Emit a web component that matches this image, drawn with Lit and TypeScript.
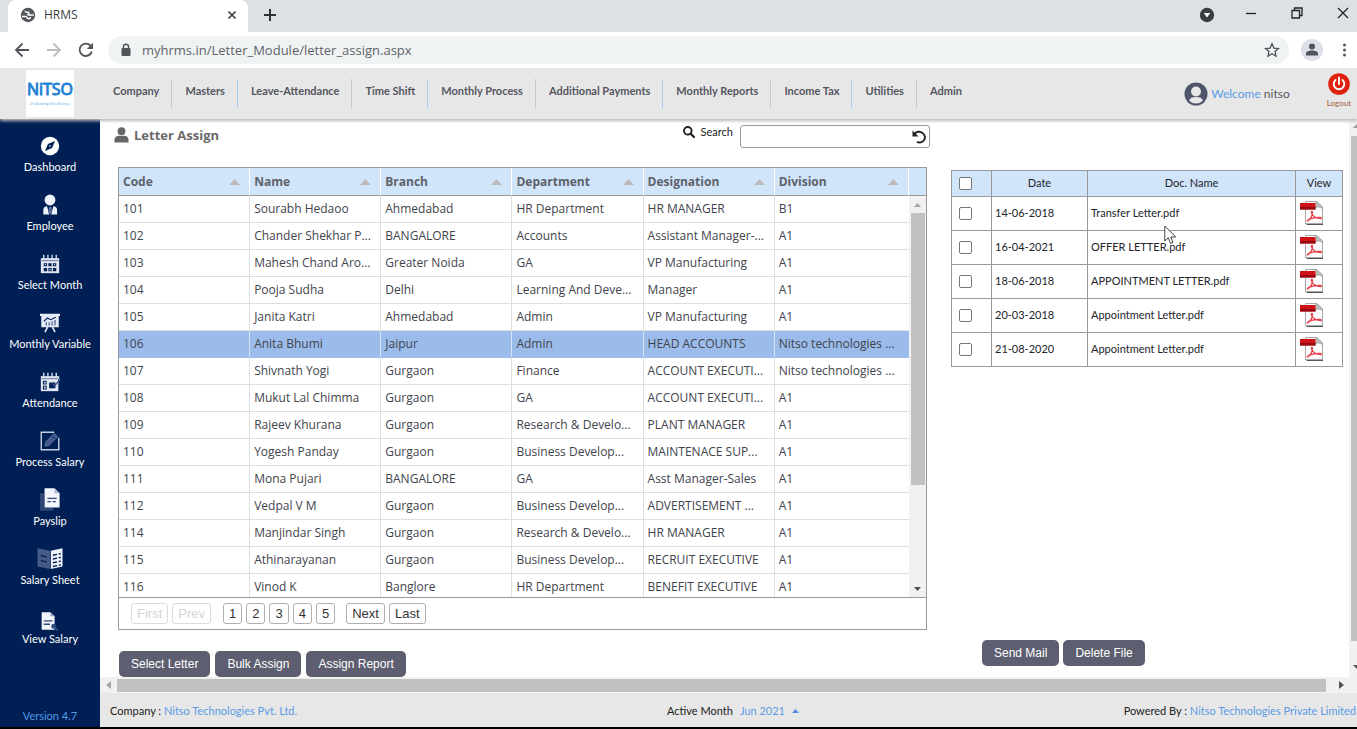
import { LitElement, html, css, svg } from "lit";
import { customElement, state } from "lit/decorators.js";
import { classMap } from "lit/directives/class-map.js";

const MENU = ["Company", "Masters", "Leave-Attendance", "Time Shift", "Monthly Process", "Additional Payments", "Monthly Reports", "Income Tax", "Utilities", "Admin"];

const NAVY = "#001f54";

const calendarTop = svg`<path d="M1 5h22v3.500H1z" fill="#dfe6f2"/><path d="M4.500 1v5M9.500 1v5M14.500 1v5M19.500 1v5" stroke="#dfe6f2" stroke-width="1.600"/><path d="M2 8.200h20" stroke="${NAVY}" stroke-width=".800"/>`;

const SIDE = [
  {
    label: "Dashboard",
    icon: svg`<circle cx="12" cy="12" r="11" fill="#fff"/><path d="M18 6l-3.500 8.500L6 18l3.500-8.500z" fill="${NAVY}"/><circle cx="12" cy="12" r="1.300" fill="#8fa0c0"/>`,
  },
  {
    label: "Employee",
    icon: svg`<circle cx="12" cy="6" r="6.500" fill="#eef3fb"/><path d="M4 23.500v-5.500c0-3 2-4.500 4.500-4.500l2.500 10zM20.500 23.500v-5.500c0-3-2-4.500-4.500-4.500l-2.500 10z" fill="#eef3fb"/><path d="M10.900 14h2.600l1 6.500-2.300 3-2.300-3z" fill="#5b6f99"/>`,
  },
  {
    label: "Select Month",
    icon: svg`${calendarTop}<path d="M1 8.500h22V23H1z" fill="#dfe6f2"/><path d="M4.500 11h4v3.800h-4zM10 11h4v3.800h-4zM15.500 11h4v3.800h-4zM4.500 16.800h4v3.800h-4zM10 16.800h4v3.800h-4zM15.500 16.800h4v3.800h-4z" fill="${NAVY}"/><path d="M5.700 12.200h1.600v1.400H5.700zM16.700 12.200h1.600v1.400h-1.600zM11.200 18h1.600v1.400h-1.600z" fill="#dfe6f2"/>`,
  },
  {
    label: "Monthly Variable",
    icon: svg`<path d="M0 1h24v2.500h-1.500V17h-21V3.500H0z" fill="#e4ebf6"/><path d="M9 17l-3 6M15 17l3 6" stroke="#e4ebf6" stroke-width="2"/><path d="M4.500 10l4.500-4 3.500 2 6.500-3" fill="none" stroke="${NAVY}" stroke-width="1.300"/><path d="M7.500 15v-4M11 15v-4M14.500 15v-5M18 15V8.500" stroke="#4b5f8c" stroke-width="1.500"/>`,
  },
  {
    label: "Attendance",
    icon: svg`${calendarTop}<path d="M1 8.500h21V23H1z" fill="#dfe6f2"/><path d="M3.500 10.500h4.500v4.500H3.500zM3.500 16.500h4.500V21H3.500zM11 12.500h7.500v7H11z" fill="${NAVY}"/><path d="M4.800 11.800h2v2h-2zM4.800 17.800h2v2h-2z" fill="#dfe6f2"/><path d="M15 14l2.500 3 7-9" fill="none" stroke="#3c5488" stroke-width="1.600"/>`,
  },
  {
    label: "Process Salary",
    icon: svg`<path d="M17 1.500H1.500v21h21V8" fill="none" stroke="#c4cede" stroke-width="1.700"/><path d="M6 18l1.200-5L17 3l4 4L11 17z" fill="#42568a" stroke="#6d80a8" stroke-width="1"/><path d="M14.500 5.500l4 4" stroke="${NAVY}" stroke-width="1"/>`,
  },
  {
    label: "Payslip",
    icon: svg`<path d="M0 4h5v17h11v4H0z" fill="#2f4576"/><path d="M5.500-2h12l6 6v17h-18z" fill="#f2f6fc"/><path d="M17.500-2v6h6z" fill="#a9b7d0"/><path d="M9 10h11M9 14h4M15 14h4" stroke="#33487a" stroke-width="1.600"/>`,
  },
  {
    label: "Salary Sheet",
    icon: svg`<path d="M-3-1l15 3v22l-15-3z" fill="#465a87"/><path d="M27-1L13 2v22l14-3z" fill="#eef3fb"/><path d="M1 8l7 1.500M1 14l7 1.500M15.500 7.500l5-1M22.500 6l2.500-.500M15.500 12l5-1M22.500 10.500l2.500-.500M15.500 16.500l5-1M22.500 15l2.500-.500M15.500 21l5-1M22.500 19.500l2.500-.500" stroke="${NAVY}" stroke-width="1.600"/>`,
  },
  {
    label: "View Salary",
    icon: svg`<path d="M2 5h10.500l5 5V26H2z" fill="#f2f6fc"/><path d="M12.500 5v5h5z" fill="#8fa0c0"/><path d="M4.500 15.500H15M4.500 19.500H12" stroke="#33487a" stroke-width="1.600"/><circle cx="16.500" cy="22" r="3" fill="#2f4a80"/><path d="M18 24l3.500 3" stroke="#2f4a80" stroke-width="2"/>`,
  },
];

const COLUMNS = ["Code", "Name", "Branch", "Department", "Designation", "Division"];

const EMPLOYEES = [
  ["101", "Sourabh Hedaoo", "Ahmedabad", "HR Department", "HR MANAGER", "B1"],
  ["102", "Chander Shekhar P...", "BANGALORE", "Accounts", "Assistant Manager-...", "A1"],
  ["103", "Mahesh Chand Aro...", "Greater Noida", "GA", "VP Manufacturing", "A1"],
  ["104", "Pooja Sudha", "Delhi", "Learning And Deve...", "Manager", "A1"],
  ["105", "Janita Katri", "Ahmedabad", "Admin", "VP Manufacturing", "A1"],
  ["106", "Anita Bhumi", "Jaipur", "Admin", "HEAD ACCOUNTS", "Nitso technologies ..."],
  ["107", "Shivnath Yogi", "Gurgaon", "Finance", "ACCOUNT EXECUTI...", "Nitso technologies ..."],
  ["108", "Mukut Lal Chimma", "Gurgaon", "GA", "ACCOUNT EXECUTI...", "A1"],
  ["109", "Rajeev Khurana", "Gurgaon", "Research & Develo...", "PLANT MANAGER", "A1"],
  ["110", "Yogesh Panday", "Gurgaon", "Business Develop...", "MAINTENACE SUP...", "A1"],
  ["111", "Mona Pujari", "BANGALORE", "GA", "Asst Manager-Sales", "A1"],
  ["112", "Vedpal V M", "Gurgaon", "Business Develop...", "ADVERTISEMENT ...", "A1"],
  ["114", "Manjindar Singh", "Gurgaon", "Research & Develo...", "HR MANAGER", "A1"],
  ["115", "Athinarayanan", "Gurgaon", "Business Develop...", "RECRUIT EXECUTIVE", "A1"],
  ["116", "Vinod K", "Banglore", "HR Department", "BENEFIT EXECUTIVE", "A1"],
];

const DOCS = [
  ["14-06-2018", "Transfer Letter.pdf"],
  ["16-04-2021", "OFFER LETTER.pdf"],
  ["18-06-2018", "APPOINTMENT LETTER.pdf"],
  ["20-03-2018", "Appointment Letter.pdf"],
  ["21-08-2020", "Appointment Letter.pdf"],
];

const reset = css`
  * { box-sizing: border-box; }
  button { font: inherit; margin: 0; padding: 0; border: 0; background: none; color: inherit; }
  svg { display: block; flex: none; }
  a { color: inherit; text-decoration: none; }
`;

@customElement("browser-bar")
export class BrowserBar extends LitElement {
  static styles = [reset, css`
    :host { display: block; font: 12px/16px "Open Sans", sans-serif; color: #3c4043; }
    .strip { display: flex; height: 32px; background: #dde1e6; padding-left: 8px; }
    .tab { display: flex; align-items: center; gap: 8px; width: 240px; padding: 0 11px 2px 12px; background: #fff; border-radius: 8px 8px 0 0; }
    .tab-name { flex: 1; }
    .plus { display: flex; align-items: center; padding: 0 15px 2px; }
    .win { display: flex; align-items: center; margin-left: auto; padding: 0 8px 7px 0; gap: 34px; }
    .badge { padding-top: 5px; margin-right: -4px; }
    .tools { display: flex; align-items: center; height: 36px; background: #fff; padding: 0 8px 0 14px; }
    .navs { display: flex; gap: 16px; margin-right: 14px; }
    .address { display: flex; align-items: center; flex: 1; height: 28px; border-radius: 14px; background: #f0f3f4; padding: 0 9px 0 12px; gap: 10px; }
    .url { flex: 1; min-width: 0; border: 0; background: none; padding: 0; font: 13px/20px "Open Sans", sans-serif; color: #5f6368; outline: 0; }
    .avatar { margin: 0 17px 0 12px; }
  `];
  render() {
    return html`
      <div class="strip">
        <div class="tab">
          <svg width="16" height="16" viewBox="0 0 16 16"><circle cx="8" cy="8" r="7.200" fill="#54585d"/><path d="M2 9.500h3.500c1.500 0 1.500 2 3 2.200 1.200.100 1.500-1 2.500-1.200M5 4.200c1 1.800 3 .300 3.800 1.300.800 1.200-1.500 1.500-.500 2.500 1 .800 3-.500 5.500 0" fill="none" stroke="#fff" stroke-width="1.500"/></svg>
          <span class="tab-name">HRMS</span>
          <button aria-label="Close tab"><svg width="10" height="10" viewBox="0 0 10 10"><path d="M1.500 1.500l7 7M8.500 1.500l-7 7" stroke="#3c4043" stroke-width="1.700"/></svg></button>
        </div>
        <button class="plus" aria-label="New tab"><svg width="14" height="14" viewBox="0 0 14 14"><path d="M7 1v12M1 7h12" stroke="#303236" stroke-width="2"/></svg></button>
        <div class="win">
          <button class="badge" aria-label="Search tabs"><svg width="16" height="16" viewBox="0 0 16 16"><circle cx="8" cy="8" r="7.200" fill="#3a3d41"/><path d="M4.800 6h6.400L8 10.500z" fill="#fff"/></svg></button>
          <button aria-label="Minimize"><svg width="12" height="12" viewBox="0 0 12 12"><path d="M1 6.500h10" stroke="#222" stroke-width="1.300"/></svg></button>
          <button aria-label="Restore"><svg width="12" height="12" viewBox="0 0 12 12"><path d="M1 3.500h7.500V11H1zM3.500 3V1H11v7.500H9" fill="none" stroke="#222" stroke-width="1.300"/></svg></button>
          <button aria-label="Close"><svg width="12" height="12" viewBox="0 0 12 12"><path d="M1 1l10 10M11 1L1 11" stroke="#222" stroke-width="1.200"/></svg></button>
        </div>
      </div>
      <div class="tools">
        <div class="navs">
          <button aria-label="Back"><svg width="16" height="16" viewBox="0 0 16 16"><path d="M15 8H2M8.500 1.500L2 8l6.500 6.500" fill="none" stroke="#505357" stroke-width="1.800"/></svg></button>
          <button aria-label="Forward"><svg width="16" height="16" viewBox="0 0 16 16"><path d="M1 8h13M7.500 1.500L14 8l-6.500 6.500" fill="none" stroke="#bbbdc0" stroke-width="1.800"/></svg></button>
          <button aria-label="Reload"><svg width="16" height="16" viewBox="0 0 16 16"><path d="M13.800 9.500A6.200 6.200 0 1 1 12.500 3.700" fill="none" stroke="#505357" stroke-width="1.900"/><path d="M15 .800v6.200H8.800z" fill="#505357"/></svg></button>
        </div>
        <div class="address">
          <svg width="12" height="14" viewBox="0 0 12 14"><rect x="1.500" y="5" width="9" height="8" rx="1" fill="#505357"/><path d="M3.500 6V3.800a2.500 2.500 0 0 1 5 0V6" fill="none" stroke="#505357" stroke-width="1.400"/></svg>
          <input class="url" aria-label="Address" .value=${"myhrms.in/Letter_Module/letter_assign.aspx"}>
          <button aria-label="Bookmark"><svg width="16" height="16" viewBox="0 0 16 16"><path d="M8 1.700l1.900 4.400 4.600.400-3.500 3.100 1.100 4.600L8 11.700l-4.100 2.500L5 9.600 1.500 6.500l4.600-.400z" fill="none" stroke="#505357" stroke-width="1.300"/></svg></button>
        </div>
        <button class="avatar" aria-label="Profile"><svg width="22" height="22" viewBox="0 0 22 22"><circle cx="11" cy="11" r="11" fill="#dcdfe5"/><circle cx="11" cy="7.500" r="3" fill="#4f5359"/><path d="M5 16.500v-2c0-2 3-3 6-3s6 1 6 3v2z" fill="#4f5359"/></svg></button>
        <button aria-label="Menu"><svg width="9" height="16" viewBox="0 0 9 16"><circle cx="4.500" cy="3" r="1.500" fill="#505357"/><circle cx="4.500" cy="8" r="1.500" fill="#505357"/><circle cx="4.500" cy="13" r="1.500" fill="#505357"/></svg></button>
      </div>`;
  }
}

@customElement("app-header")
export class AppHeader extends LitElement {
  static styles = [reset, css`
    :host { display: flex; height: 51px; background: #e7e7e7; box-shadow: 0 2px 3px #bbb; color: #55565f; font: bold 11px/14px Lato, sans-serif; position: relative; z-index: 1; padding: 0 6px 0 26px; }
    .logo { display: flex; flex-direction: column; align-items: center; width: 48px; margin: 2px 26px 2px 0; padding-top: 8px; background: #fff; overflow: hidden; }
    .brand { font: 16px/22px "Open Sans", sans-serif; color: #2583d6; -webkit-text-stroke: 1px #2583d6; }
    .motto { font: 4px/8px "Open Sans", sans-serif; color: #4da3dc; white-space: nowrap; }
    .menu { display: flex; list-style: none; margin: 11px 0 0; padding: 0; height: 30px; }
    .entry { padding: 5px 12px 0 13px; border-right: 1px solid #c3cad2; height: 29px; white-space: nowrap; }
    .entry:nth-child(even) { border-color: #a9cdee; }
    .entry:last-child { border: 0; }
    .user { display: flex; align-items: center; gap: 3px; margin-left: auto; font: 12px/16px Lato, sans-serif; }
    .hello { color: #5a9be6; }
    .logout { display: flex; flex-direction: column; align-items: center; margin-left: 37px; padding-top: 5px; font: 8px/12px Lato, sans-serif; color: #a3603f; gap: 2px; }
  `];
  render() {
    return html`
      <a class="logo" href="#"><span class="brand">NiTSO</span><span class="motto">–Following Excellency–</span></a>
      <ul class="menu">${MENU.map(m => html`<li class="entry"><a href="#">${m}</a></li>`)}</ul>
      <div class="user">
        <svg width="24" height="24" viewBox="0 0 24 24"><circle cx="12" cy="12" r="11.500" fill="#50566a"/><circle cx="12" cy="9.500" r="5" fill="#e7e7e7"/><path d="M5 18.500c1-2.500 3-3.500 7-3.500s6 1 7 3.500a9.500 9.500 0 0 1-14 0z" fill="#e7e7e7"/></svg>
        <span><span class="hello">Welcome</span> nitso</span>
      </div>
      <a class="logout" href="#"><svg width="22" height="22" viewBox="0 0 22 22"><circle cx="11" cy="11" r="10.800" fill="#df2210"/><path d="M7.500 7a5.300 5.300 0 1 0 7 0M11 4.500V11" fill="none" stroke="#fff" stroke-width="1.900" stroke-linecap="round"/></svg>Logout</a>`;
  }
}

@customElement("side-menu")
export class SideMenu extends LitElement {
  static styles = [reset, css`
    :host { display: flex; flex-direction: column; justify-content: space-between; width: 100px; flex: none; background: #001f54; color: #fff; font: 11px/16px Lato, sans-serif; text-align: center; padding: 11px 0 3px; overflow: hidden; }
    .list { list-style: none; margin: 0; padding: 0; }
    .item { padding: 3px 0 14px; white-space: nowrap; }
    .icon { display: flex; align-items: center; justify-content: center; height: 26px; }
    .version { color: #4f9be6; }
  `];
  render() {
    return html`
      <ul class="list">${SIDE.map(s => html`<li class="item"><a href="#"><span class="icon"><svg width="20" height="20" viewBox="0 0 24 24" overflow="visible">${s.icon}</svg></span>${s.label}</a></li>`)}</ul>
      <div class="version">Version 4.7</div>`;
  }
}

@customElement("employee-grid")
export class EmployeeGrid extends LitElement {
  static styles = [reset, css`
    :host { display: flex; flex-direction: column; min-height: 0; border: 1px solid #999; background: #fff; font: 12px/16px "Open Sans", sans-serif; color: #41444c; }
    .view { display: flex; flex: 1 1 0; min-height: 0; overflow: hidden; }
    .rows { flex: 1; min-width: 0; overflow: hidden; }
    .grid { width: 100%; border-collapse: separate; border-spacing: 0; table-layout: fixed; }
    .head { height: 28px; background: #d1e5fa; text-align: left; color: #5d626b; padding: 0 9px 0 4px; border-right: 1px solid #fff; border-bottom: 1px solid #999; }
    .head:last-child { width: 17%; }
    .sort { display: flex; justify-content: space-between; align-items: center; width: 100%; font-weight: bold; text-align: left; }
    .cell { height: 27px; padding: 0 0 0 4px; border-right: 1px solid #dedede; border-bottom: 1px solid #dedede; white-space: nowrap; overflow: hidden; }
    .cell:last-child { border-right: 0; }
    .picked .cell { background: #9bbcea; border-right-color: #d5e2f5; border-bottom-color: #9bbcea; }
    .rail { display: flex; flex-direction: column; width: 17px; background: #f1f1f1; }
    .corner { height: 28px; background: #d1e5fa; border-bottom: 1px solid #999; }
    .arrow { display: flex; justify-content: center; align-items: center; height: 17px; }
    .track { flex: 1; padding: 0 1px 0 2px; }
    .thumb { height: 74%; background: #c1c1c1; }
    .pager { display: flex; align-items: center; gap: 4px; height: 32px; padding-left: 12px; border-top: 1px solid #999; font: 13px/15px "Liberation Sans", sans-serif; color: #333; }
    .page { height: 21px; padding: 0 5px; border: 1px solid #b0b0b0; border-radius: 3px; }
    .page:disabled { color: #d5d5d5; border-color: #dcdcdc; }
    .numbers { display: flex; gap: 4px; margin: 0 7px 0 8px; }
  `];
  @state() picked = "106";
  render() {
    return html`
      <div class="view">
        <div class="rows"><table class="grid">
          <thead><tr>${COLUMNS.map(c => html`<th class="head"><button class="sort">${c}<svg width="11" height="6" viewBox="0 0 11 6"><path d="M0 6l5.500-6L11 6z" fill="#bbb"/></svg></button></th>`)}</tr></thead>
          <tbody>${EMPLOYEES.map(r => html`<tr class=${classMap({ picked: r[0] === this.picked })} @click=${() => (this.picked = r[0])}>${r.map(v => html`<td class="cell">${v}</td>`)}</tr>`)}</tbody>
        </table></div>
        <div class="rail">
          <div class="corner"></div>
          <div class="arrow"><svg width="7" height="4" viewBox="0 0 7 4"><path d="M0 4l3.500-4L7 4z" fill="#a3a3a3"/></svg></div>
          <div class="track"><div class="thumb"></div></div>
          <div class="arrow"><svg width="7" height="4" viewBox="0 0 7 4"><path d="M0 0l3.500 4L7 0z" fill="#505050"/></svg></div>
        </div>
      </div>
      <div class="pager">
        <button class="page" disabled>First</button><button class="page" disabled>Prev</button>
        <span class="numbers">${[1, 2, 3, 4, 5].map(n => html`<button class="page">${n}</button>`)}</span>
        <button class="page">Next</button><button class="page">Last</button>
      </div>`;
  }
}

@customElement("document-list")
export class DocumentList extends LitElement {
  static styles = [reset, css`
    :host { display: block; font: 11px/14px Lato, sans-serif; color: #22242a; position: relative; }
    .docs { width: 100%; border-collapse: collapse; table-layout: fixed; }
    .docs th, .docs td { border: 1px solid #999; padding: 0 3px 2px; height: 34px; text-align: left; }
    .docs th { height: 26px; background: #d1e5fa; font-weight: normal; text-align: center; }
    .docs .tick { width: 40px; padding: 0 7px; text-align: left; }
    .docs .date { width: 96px; }
    .docs .view { width: 47px; }
    .box { appearance: none; display: block; width: 13px; height: 13px; margin: 0; background: #fff; border: 1px solid #777; border-radius: 2px; }
    .pointer { position: absolute; left: 213px; top: 55px; }
  `];
  render() {
    return html`
      <table class="docs">
        <thead><tr><th class="tick"><input class="box" type="checkbox" aria-label="Select all"></th><th class="date">Date</th><th>Doc. Name</th><th class="view">View</th></tr></thead>
        <tbody>${DOCS.map(([date, name]) => html`<tr>
          <td class="tick"><input class="box" type="checkbox" aria-label="Select ${name}"></td><td>${date}</td><td>${name}</td>
          <td><a href="#" aria-label="View ${name}"><svg width="26" height="26" viewBox="0 0 26 26">
            <path d="M6 22.500h18V25H8z" fill="#555"/><path d="M6.500 1.500h11l6 5.500v16.500h-17z" fill="#fcfcfc" stroke="#a9a9a9"/><path d="M16 1.500c1.500 1.500 1.500 4 .500 6 2.500-.800 5-.500 7 1V7l-6-5.500z" fill="#b9c2bd" stroke="#8d9691" stroke-width=".700"/>
            <path d="M1 3h15.500v6.500H1z" fill="#d01218"/><path d="M1 7h15.500v2.500H1z" fill="#960a10"/>
            <path d="M8.500 21c2.500-1.500 4.800-5 5-8.500.100-1.500-1.400-1.500-1.200 0 .500 3 5 6.200 9.500 6.200.800-.200.500-1.200-.500-1.300-4-.200-8 .500-11.500 2-1.300.800-1.800 1.800-1.300 1.600z" fill="none" stroke="#e8404a" stroke-width="1.300"/>
          </svg></a></td></tr>`)}</tbody>
      </table>
      <svg class="pointer" width="13" height="20" viewBox="0 0 13 20"><path d="M.800 1v15l3.500-3.200 2.300 5.600 2.400-1-2.300-5.400h5z" fill="#fff" stroke="#444" stroke-width="1"/></svg>`;
  }
}

@customElement("app-root")
export class AppRoot extends LitElement {
  static styles = [reset, css`
    :host { display: flex; flex-direction: column; height: 100vh; min-height: 500px; overflow: hidden; background: #fff; border-bottom: 2px solid #000; box-sizing: border-box; font: 11px/14px Lato, sans-serif; }
    .body { display: flex; flex: 1; min-height: 0; }
    .main { display: flex; flex-direction: column; flex: 1; min-width: 0; }
    .scroll { display: flex; flex: 1; min-height: 0; }
    .content { display: grid; grid-template-columns: minmax(0, 1fr) 392px; gap: 24px; flex: 1; padding: 0 6px 0 18px; min-width: 0; }
    .left { display: flex; flex-direction: column; min-height: 0; }
    .right { display: flex; flex-direction: column; justify-content: space-between; padding: 51px 0 11px; }
    .top { display: flex; height: 48px; align-items: flex-start; padding-top: 6px; }
    .title { display: flex; align-items: center; gap: 5px; margin: 0 auto 0 -4px; font: bold 13px/20px "Open Sans", sans-serif; color: #6a6a6a; }
    .search { display: flex; align-items: center; gap: 6px; color: #222; padding-right: 7px; line-height: 14px; }
    .field { display: flex; align-items: center; width: 190px; height: 23px; border: 1px solid #999; border-radius: 3px; padding-right: 3px; margin-right: -3px; }
    .query { flex: 1; min-width: 0; border: 0; outline: 0; background: none; }
    .panel { flex: 1; }
    .actions { display: flex; gap: 5px; padding: 21px 0 0 1px; }
    .mail { display: flex; gap: 4px; padding-left: 31px; }
    .btn { height: 26px; padding: 0 12px; border-radius: 5px; background: #5d5f70; color: #fff; font: 12px/14px "Liberation Sans", sans-serif; }
    .vbar { display: flex; flex-direction: column; align-items: flex-end; width: 8px; background: #f1f1f1; padding: 5px 0 8px; gap: 8px; }
    .vthumb { width: 6px; flex: 1; background: #c1c1c1; margin-bottom: 16px; }
    .hbar { display: flex; align-items: center; height: 16px; background: #f1f1f1; padding: 0 13px 0 6px; gap: 6px; }
    .hthumb { flex: 1; height: 13px; background: #c1c1c1; margin-right: 7px; }
    .foot { display: grid; grid-template-columns: 1fr auto 1fr; align-items: center; height: 34px; background: #e7e7e7; padding: 2px 1px 0 10px; color: #222; }
    .month { display: flex; align-items: center; gap: 7px; }
    .link { color: #5a9be6; }
    .power { text-align: right; }
  `];
  render() {
    return html`
      <browser-bar></browser-bar>
      <app-header></app-header>
      <div class="body">
        <side-menu></side-menu>
        <div class="main">
          <div class="scroll">
            <div class="content">
              <section class="left">
                <div class="top">
                  <h1 class="title"><svg width="15" height="16" viewBox="0 0 15 16"><circle cx="7.500" cy="4.200" r="3.900" fill="#666"/><path d="M.500 15.500v-3c0-2.500 2-3.800 4.500-3.800h5c2.500 0 4.500 1.300 4.500 3.800v3z" fill="#666"/></svg>Letter Assign</h1>
                  <label class="search" for="q"><svg width="12" height="12" viewBox="0 0 12 12"><circle cx="4.800" cy="4.800" r="3.800" fill="none" stroke="#222" stroke-width="1.900"/><path d="M7.700 7.700l3.300 3.300" stroke="#222" stroke-width="2.200" stroke-linecap="round"/></svg>Search</label>
                  <div class="field"><input class="query" id="q" type="text"><button aria-label="Reset search"><svg width="14" height="14" viewBox="0 0 14 14"><path d="M2 4.200C4 1.500 8 .800 10.500 3a5 5 0 0 1-5.500 8.700" fill="none" stroke="#222" stroke-width="1.900"/><path d="M.500.500v6h6z" fill="#222"/></svg></button></div>
                </div>
                <employee-grid class="panel"></employee-grid>
                <div class="actions"><button class="btn">Select Letter</button><button class="btn">Bulk Assign</button><button class="btn">Assign Report</button></div>
              </section>
              <section class="right">
                <document-list></document-list>
                <div class="mail"><button class="btn">Send Mail</button><button class="btn">Delete File</button></div>
              </section>
            </div>
            <div class="vbar"><svg width="4" height="4" viewBox="0 0 4 4"><path d="M0 4l4-4v4z" fill="#999"/></svg><div class="vthumb"></div><svg width="4" height="4" viewBox="0 0 4 4"><path d="M0 0l4 4V0z" fill="#505050"/></svg></div>
          </div>
          <div class="hbar"><svg width="5" height="8" viewBox="0 0 5 8"><path d="M5 0v8L0 4z" fill="#a3a3a3"/></svg><div class="hthumb"></div><svg width="5" height="8" viewBox="0 0 5 8"><path d="M0 0v8l5-4z" fill="#505050"/></svg></div>
          <footer class="foot">
            <span>Company : <a class="link" href="#">Nitso Technologies Pvt. Ltd.</a></span>
            <span class="month">Active Month <a class="link" href="#">Jun 2021</a><svg width="7" height="4" viewBox="0 0 7 4"><path d="M0 4l3.500-4L7 4z" fill="#4f8fe0"/></svg></span>
            <span class="power">Powered By : <a class="link" href="#">Nitso Technologies Private Limited</a></span>
          </footer>
        </div>
      </div>`;
  }
}
